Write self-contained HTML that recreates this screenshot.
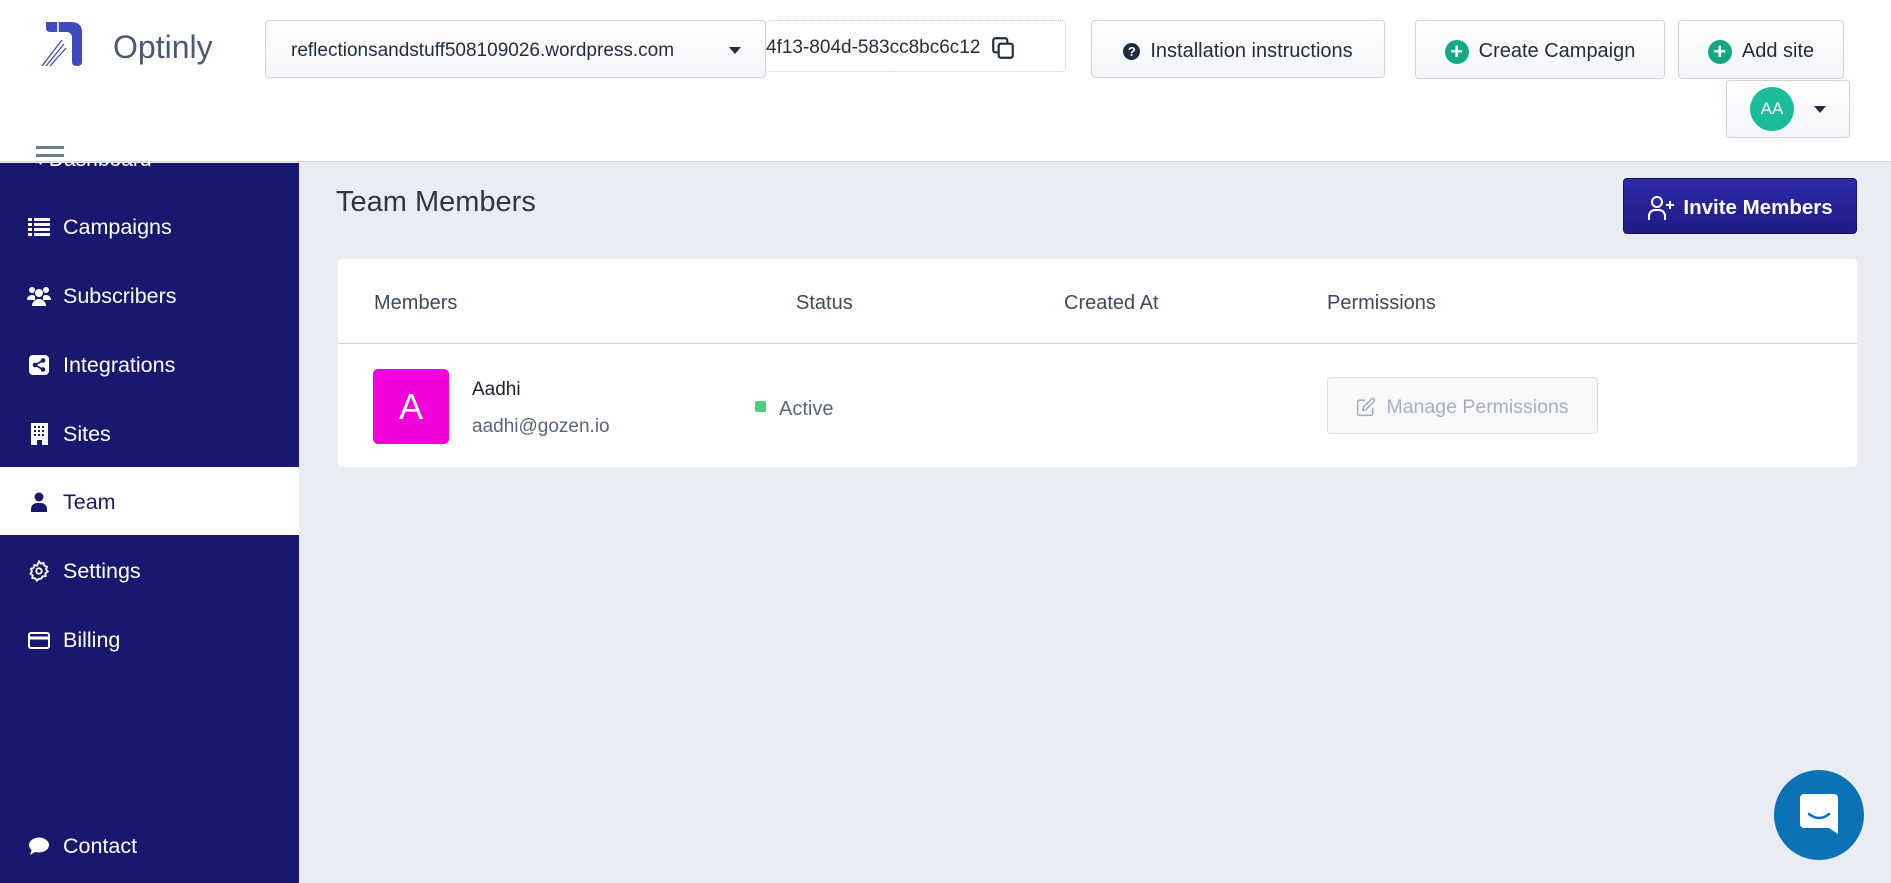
<!DOCTYPE html>
<html><head><meta charset="utf-8"><style>
*{box-sizing:border-box;margin:0;padding:0}
body{width:1891px;height:883px;overflow:hidden;background:#e9ecf2;font-family:"Liberation Sans",sans-serif;position:relative;color:#2d3748}
.hdr{position:absolute;left:0;top:0;width:1891px;height:162px;background:#fff;border-bottom:1px solid #cfd4dc;z-index:2}
.top{z-index:3}
.btn{position:absolute;z-index:3;background:linear-gradient(#fff,#f3f5f8);border:1px solid #cdd3dc;border-radius:4px;font-size:20px;color:#1f2d3d;display:flex;align-items:center;justify-content:center;gap:10px;padding-top:4px}
.side{position:absolute;left:0;top:163px;width:299px;height:720px;background:#18186e}
.item{position:absolute;left:0;width:299px;height:68px;display:flex;align-items:center;color:#fff;font-size:21.5px;padding-top:2px}
.item .ic{width:26px;margin-left:26px;margin-right:11px;display:flex;justify-content:center}
.item.act{background:#fff;color:#18186e}
.card{position:absolute;left:338px;top:259px;width:1519px;height:208px;background:#fff;border-radius:4px}
.th{position:absolute;top:292px;font-size:20px;color:#3d4a5c}
.plus{width:24px;height:24px;border-radius:50%;background:#13a883;color:#fff;display:flex;align-items:center;justify-content:center;font-weight:bold;font-size:22px;line-height:1}
</style></head><body>
<div class="hdr"></div>
<svg class="top" style="position:absolute;left:40px;top:18px" width="52" height="50" viewBox="0 0 52 50">
<path d="M6 4 H31 Q42 4 42 14 V44 Q42 48 37 48 Q32 48 32 44 V20 Q32 14 26 14 H10 Q6 14 6 10Z" fill="#3f4bbd"/>
<path d="M18 4 V14" stroke="#fff" stroke-width="1.5"/>
<path d="M2 48 L22 22 M6 48 L24 26 M10 48 L26 30" stroke="#3f4bbd" stroke-width="1.3"/>
</svg>
<div class="top" style="position:absolute;left:113px;top:29px;font-size:32px;color:#4a5872">Optinly</div>
<div class="btn" style="left:766px;top:20px;width:300px;height:52px;border:1px dotted #bfc6d0;border-left:none;justify-content:flex-start;padding-left:0;font-size:19px;background:#fff;z-index:3">4f13-804d-583cc8bc6c12
<svg width="26" height="26" viewBox="0 0 24 24" fill="none" stroke="#1f2d3d" stroke-width="2"><rect x="8" y="8" width="13" height="13" rx="2"/><path d="M16 8V5a2 2 0 0 0-2-2H5a2 2 0 0 0-2 2v9a2 2 0 0 0 2 2h3"/></svg></div>
<div class="btn" style="left:265px;top:20px;width:501px;height:58px;justify-content:flex-start;padding-left:25px;font-size:19px;z-index:4">reflectionsandstuff508109026.wordpress.com<span style="position:absolute;right:24px;top:26px;border:6px solid transparent;border-top:7px solid #1f2d3d;border-bottom:0"></span></div>
<div class="btn" style="left:1091px;top:20px;width:294px;height:58px"><span style="width:17px;height:17px;border-radius:50%;background:#1f2d3d;color:#fff;font-size:13px;font-weight:bold;display:flex;align-items:center;justify-content:center">?</span>Installation instructions</div>
<div class="btn" style="left:1415px;top:20px;width:250px;height:59px"><span class="plus">+</span>Create Campaign</div>
<div class="btn" style="left:1678px;top:20px;width:166px;height:59px"><span class="plus">+</span>Add site</div>
<div class="btn" style="left:1726px;top:80px;width:124px;height:58px;gap:20px;padding-top:0"><span style="width:44px;height:44px;border-radius:50%;background:#1abc9c;color:#fff;font-size:17px;display:flex;align-items:center;justify-content:center">AA</span><span style="border:6px solid transparent;border-top:7px solid #1f2d3d;border-bottom:0"></span></div>
<div class="side">
<div style="position:absolute;left:36px;top:-15px;color:#fff;font-size:21px">‹ Dashboard</div>
<div class="item" style="top:29px"><span class="ic"><svg width="22" height="18" viewBox="0 0 22 18" fill="#fff"><rect x="0" y="0" width="4" height="3"/><rect x="6" y="0" width="16" height="3"/><rect x="0" y="5" width="4" height="3"/><rect x="6" y="5" width="16" height="3"/><rect x="0" y="10" width="4" height="3"/><rect x="6" y="10" width="16" height="3"/><rect x="0" y="15" width="4" height="3"/><rect x="6" y="15" width="16" height="3"/></svg></span>Campaigns</div>
<div class="item" style="top:98px"><span class="ic"><svg width="24" height="20" viewBox="0 0 24 20" fill="#fff"><circle cx="5" cy="4" r="3"/><circle cx="19" cy="4" r="3"/><circle cx="12" cy="7" r="4"/><path d="M0 14a5 5 0 0 1 8-4v4zM24 14a5 5 0 0 0-8-4v4zM5 20a7 7 0 0 1 14 0z"/></svg></span>Subscribers</div>
<div class="item" style="top:167px"><span class="ic"><svg width="20" height="20" viewBox="0 0 20 20"><rect width="20" height="20" rx="4" fill="#fff"/><circle cx="6" cy="10" r="2.3" fill="#18186e"/><circle cx="14" cy="5.5" r="2.3" fill="#18186e"/><circle cx="14" cy="14.5" r="2.3" fill="#18186e"/><path d="M6 10L14 5.5M6 10L14 14.5" stroke="#18186e" stroke-width="1.6"/></svg></span>Integrations</div>
<div class="item" style="top:236px"><span class="ic"><svg width="17" height="22" viewBox="0 0 17 22"><rect width="17" height="22" fill="#fff"/><g fill="#18186e"><rect x="3" y="3" width="2" height="2"/><rect x="7" y="3" width="2" height="2"/><rect x="11" y="3" width="2" height="2"/><rect x="3" y="7" width="2" height="2"/><rect x="7" y="7" width="2" height="2"/><rect x="11" y="7" width="2" height="2"/><rect x="3" y="11" width="2" height="2"/><rect x="7" y="11" width="2" height="2"/><rect x="11" y="11" width="2" height="2"/><rect x="6" y="17" width="5" height="5"/></g></svg></span>Sites</div>
<div class="item act" style="top:304px"><span class="ic"><svg width="16" height="20" viewBox="0 0 16 20" fill="#18186e"><circle cx="8" cy="5" r="4.5"/><path d="M0 20v-3a6 6 0 0 1 6-6h4a6 6 0 0 1 6 6v3z"/></svg></span>Team</div>
<div class="item" style="top:373px"><span class="ic"><svg width="22" height="22" viewBox="0 0 24 24" fill="none" stroke="#fff" stroke-width="2"><circle cx="12" cy="12" r="3"/><path d="M12 1.5l2 2.5 3-.8.8 3 2.9 1.2-1 2.8 1.8 2.5-2.5 1.8.2 3.1-3.1.2-1.8 2.5L12 20.5l-2.3 2-1.8-2.5-3.1-.2.2-3.1L2.5 14.9l1.8-2.5-1-2.8 2.9-1.2.8-3 3 .8z"/></svg></span>Settings</div>
<div class="item" style="top:442px"><span class="ic"><svg width="22" height="17" viewBox="0 0 22 17" fill="none" stroke="#fff" stroke-width="2"><rect x="1" y="1" width="20" height="15" rx="2"/><path d="M1 6h20" stroke-width="3"/></svg></span>Billing</div>
<div class="item" style="top:648px"><span class="ic"><svg width="20" height="18" viewBox="0 0 20 18" fill="#fff"><ellipse cx="10" cy="8" rx="10" ry="7.5"/><path d="M3 12L1 18L8 14z"/></svg></span>Contact</div>
</div>
<div style="position:absolute;left:36px;top:146px;width:28px;height:3px;background:#6b7a90;box-shadow:0 8px 0 #6b7a90;z-index:3"></div>
<div style="position:absolute;left:336px;top:186px;font-size:29px;color:#2d3748">Team Members</div>
<div style="position:absolute;left:1623px;top:178px;width:234px;height:56px;background:linear-gradient(#2f2aa8,#1d1b84);border:1px solid #16145f;border-radius:4px;color:#fff;font-size:20.5px;font-weight:bold;display:flex;align-items:center;justify-content:center;gap:8px;padding-top:3px">
<svg width="28" height="26" viewBox="0 0 28 26" fill="none" stroke="#fff" stroke-width="2"><circle cx="10" cy="7" r="5"/><path d="M2 25v-4a6 6 0 0 1 6-6h4a6 6 0 0 1 6 6v4M23 6v8M19 10h8"/></svg>Invite Members</div>
<div class="card"></div>
<div style="position:absolute;left:338px;top:343px;width:1519px;height:1px;background:#cfd4dc"></div>
<div class="th" style="left:374px">Members</div>
<div class="th" style="left:796px">Status</div>
<div class="th" style="left:1064px">Created At</div>
<div class="th" style="left:1327px">Permissions</div>
<div style="position:absolute;left:373px;top:369px;width:76px;height:75px;background:#f100d9;border-radius:5px;color:#fff;font-size:36px;display:flex;align-items:center;justify-content:center">A</div>
<div style="position:absolute;left:472px;top:379px;font-size:19px;color:#1a202c">Aadhi</div>
<div style="position:absolute;left:472px;top:416px;font-size:19px;color:#5a6678">aadhi@gozen.io</div>
<div style="position:absolute;left:755px;top:401px;width:11px;height:11px;border-radius:2px;background:#48d17a"></div>
<div style="position:absolute;left:779px;top:398px;font-size:20px;color:#5a6678">Active</div>
<div style="position:absolute;left:1327px;top:377px;width:271px;height:57px;border:1px solid #dde1e7;border-radius:4px;background:#f7f8fa;color:#a8b0bc;font-size:19.5px;display:flex;align-items:center;justify-content:center;gap:10px;padding-top:3px">
<svg width="20" height="20" viewBox="0 0 24 24" fill="none" stroke="#a8b0bc" stroke-width="2"><path d="M11 4H4a2 2 0 0 0-2 2v14a2 2 0 0 0 2 2h14a2 2 0 0 0 2-2v-7"/><path d="M18.5 2.5a2.1 2.1 0 0 1 3 3L12 15l-4 1 1-4z"/></svg>Manage Permissions</div>
<div style="position:absolute;left:1774px;top:770px;width:90px;height:90px;border-radius:50%;background:#0b72b5">
<svg style="position:absolute;left:24px;top:22px" width="42" height="44" viewBox="0 0 42 44"><path d="M6 2h30a4 4 0 0 1 4 4v36l-9-6H6a4 4 0 0 1-4-4V6a4 4 0 0 1 4-4z" fill="#fff"/><path d="M11 22q10 8 20 0" stroke="#0b72b5" stroke-width="2.5" fill="none" stroke-linecap="round"/></svg></div>
</body></html>
